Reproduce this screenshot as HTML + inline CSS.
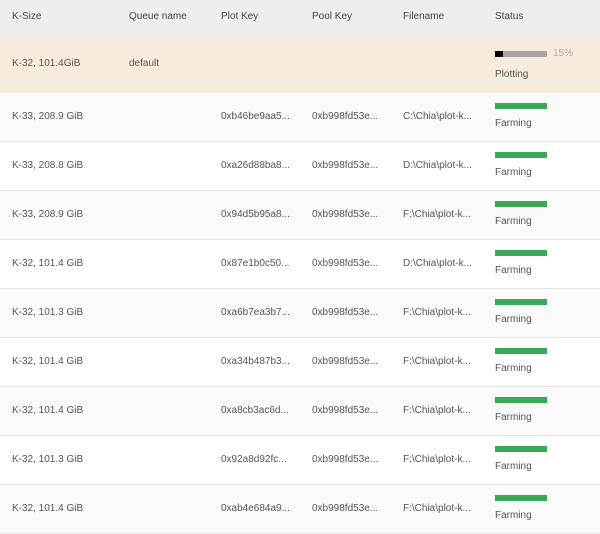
<!DOCTYPE html><html><head><style>
body{margin:0;width:600px;height:530px;overflow:hidden;font-family:"Liberation Sans",Arial,sans-serif;font-size:10px;color:#555;background:#fff;position:relative}
.r{position:absolute;left:0;width:600px;border-bottom:1px solid #e4e4e4;box-sizing:border-box}
.t{position:absolute;white-space:nowrap}
.h{color:#444;font-size:10px}
.bar{position:absolute;left:495px;width:52px;height:6px;background:#3aa856}
</style></head><body>
<div class="r" style="top:0;height:37px;background:#eeeeee;border:none"></div>
<div class="t h" style="left:12px;top:11px">K-Size</div>
<div class="t h" style="left:129px;top:11px">Queue name</div>
<div class="t h" style="left:221px;top:11px">Plot Key</div>
<div class="t h" style="left:312px;top:11px">Pool Key</div>
<div class="t h" style="left:403px;top:11px">Filename</div>
<div class="t h" style="left:495px;top:11px">Status</div>
<div class="r" style="top:37px;height:56px;background:#f7ecdc;border:none"></div>
<div class="t" style="left:12px;top:58px">K-32, 101.4GiB</div>
<div class="t" style="left:129px;top:58px">default</div>
<div style="position:absolute;left:495px;top:51px;width:52px;height:6px;background:#a9a3a3"><div style="width:8px;height:6px;background:#000"></div></div>
<div class="t" style="left:553px;top:48px;color:#aaa">15%</div>
<div class="t" style="left:495px;top:69px">Plotting</div>
<div id="rows"></div>
<script>
var d=[["K-33, 208.9 GiB","0xb46be9aa5...","C:\\Chia\\plot-k..."],["K-33, 208.8 GiB","0xa26d88ba8...","D:\\Chia\\plot-k..."],["K-33, 208.9 GiB","0x94d5b95a8...","F:\\Chia\\plot-k..."],["K-32, 101.4 GiB","0x87e1b0c50...","D:\\Chia\\plot-k..."],["K-32, 101.3 GiB","0xa6b7ea3b7...","F:\\Chia\\plot-k..."],["K-32, 101.4 GiB","0xa34b487b3...","F:\\Chia\\plot-k..."],["K-32, 101.4 GiB","0xa8cb3ac6d...","F:\\Chia\\plot-k..."],["K-32, 101.3 GiB","0x92a8d92fc...","F:\\Chia\\plot-k..."],["K-32, 101.4 GiB","0xab4e684a9...","F:\\Chia\\plot-k..."]];
var h="";d.forEach(function(r,i){var y=93+i*49;
h+='<div class="r" style="top:'+y+'px;height:49px;background:'+(i%2?'#fff':'#fafafa')+'"></div>';
h+='<div class="t" style="left:12px;top:'+(y+18)+'px">'+r[0]+'</div>';
h+='<div class="t" style="left:221px;top:'+(y+18)+'px">'+r[1]+'</div>';
h+='<div class="t" style="left:312px;top:'+(y+18)+'px">0xb998fd53e...</div>';
h+='<div class="t" style="left:403px;top:'+(y+18)+'px">'+r[2]+'</div>';
h+='<div class="bar" style="top:'+(y+10)+'px"></div>';
h+='<div class="t" style="left:495px;top:'+(y+25)+'px">Farming</div>';});
document.getElementById("rows").innerHTML=h;
</script>
</body></html>
